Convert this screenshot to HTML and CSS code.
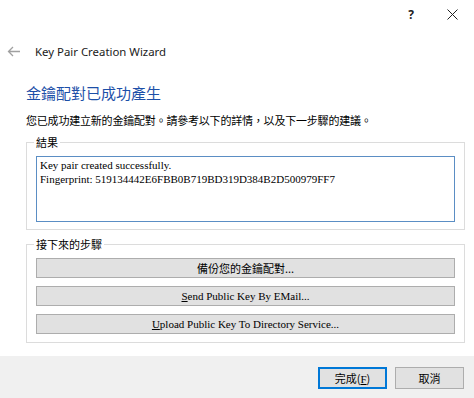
FILE: index.html
```html
<!DOCTYPE html>
<html lang="zh-Hant">
<head>
	<meta charset="UTF-8">
	<title>Key Pair Creation Wizard</title>
	<link rel="stylesheet" href="styles.css">
</head>
<body>
	<div class="titlebar">
		<span class="capbtn help">?</span>
		<span class="capbtn">
			<svg width="11" height="11" viewBox="0 0 11 11"><path d="M0.5 0.5 L10.5 10.5 M10.5 0.5 L0.5 10.5" stroke="#222" stroke-width="1" fill="none"/></svg>
		</span>
	</div>
	<div class="header">
		<svg class="back" width="13" height="11" viewBox="0 0 13 11"><path d="M13 5.5 H1.5 M6 1 L1.5 5.5 L6 10" stroke="#a0a0a0" stroke-width="1.3" fill="none"/></svg>
		<span class="wizname">Key Pair Creation Wizard</span>
	</div>
	<div class="content">
		<h1>金鑰配對已成功產生</h1>
		<p class="desc">您已成功建立新的金鑰配對。請參考以下的詳情，以及下一步驟的建議。</p>

		<fieldset class="grupo">
			<legend>結果</legend>
			<div class="resultado">Key pair created successfully.<br>Fingerprint: 519134442E6FBB0B719BD319D384B2D500979FF7</div>
		</fieldset>

		<fieldset class="grupo pasos">
			<legend>接下來的步驟</legend>
			<button class="paso cjk">備份您的金鑰配對...</button>
			<button class="paso"><u>S</u>end Public Key By EMail...</button>
			<button class="paso"><u>U</u>pload Public Key To Directory Service...</button>
		</fieldset>
	</div>
	<div class="footer">
		<button class="dlgbtn default">完成(<u>F</u>)</button>
		<button class="dlgbtn">取消</button>
	</div>
</body>
</html>
```

FILE: styles.css
```css
*{
	margin:0;
	padding:0;
	box-sizing: border-box;
}
body{
	width: 474px;
	height: 398px;
	background: #fff;
	font-family: "Noto Sans", "Noto Sans CJK TC", sans-serif;
	color: #000;
	overflow: hidden;
}
.titlebar{
	height: 29px;
	display: flex;
	justify-content: flex-end;
}
.capbtn{
	width: 44px;
	height: 29px;
	display: flex;
	align-items: center;
	justify-content: center;
	font-size: 12px;
	font-weight: bold;
	color: #222;
}
.capbtn.help{
	padding-left: 6px;
}
.header{
	margin-top: 11px;
	height: 22px;
	display: flex;
	align-items: center;
	padding-left: 7px;
}
.header .back{
	margin-right: 15px;
}
.wizname{
	font-size: 11.4px;
	color: #1a1a1a;
}
.content{
	padding: 0 9px 0 26px;
}
h1{
	margin-top: 21px;
	font-family: "Noto Sans CJK TC", sans-serif;
	font-weight: normal;
	font-size: 15px;
	line-height: 20px;
	color: #1c4fa8;
}
.desc{
	margin-top: 9px;
	font-family: "Noto Sans CJK TC", sans-serif;
	font-size: 11px;
	line-height: 16px;
	letter-spacing: -0.2px;
}
.grupo{
	margin-top: 6px;
	border: 1px solid #dcdcdc;
	padding: 0 9px 7px 9px;
}
.grupo legend{
	margin-left: -2px;
	padding: 0 2px;
	font-family: "Noto Sans CJK TC", sans-serif;
	font-size: 11px;
	line-height: 16px;
}
.resultado{
	margin-top: 6px;
	height: 66px;
	border: 1px solid #5b8ec4;
	padding: 1px 3px;
	font-family: "Liberation Serif", serif;
	font-size: 11px;
	line-height: 14px;
}
.pasos{
	padding-bottom: 8px;
	display: flex;
	flex-direction: column;
	gap: 8px;
}
.pasos legend{
	margin-bottom: 6px;
}
.paso{
	height: 20px;
	width: 100%;
	background: #e1e1e1;
	border: 1px solid #adadad;
	font-family: "Liberation Serif", serif;
	font-size: 11px;
	color: #000;
}
.paso.cjk{
	font-family: "Noto Sans CJK TC", sans-serif;
	font-size: 11px;
}
.footer{
	margin-top: 13px;
	height: 42px;
	background: #f0f0f0;
	display: flex;
	justify-content: flex-end;
	align-items: flex-start;
	gap: 8px;
	padding: 11px 10px 0 0;
}
.dlgbtn{
	width: 69px;
	height: 22px;
	background: #e1e1e1;
	border: 1px solid #adadad;
	font-family: "Noto Sans CJK TC", sans-serif;
	font-size: 11px;
	color: #000;
}
.dlgbtn.default{
	border: 2px solid #0078d7;
}
.dlgbtn u{
	font-family: "Liberation Serif", serif;
}
```
